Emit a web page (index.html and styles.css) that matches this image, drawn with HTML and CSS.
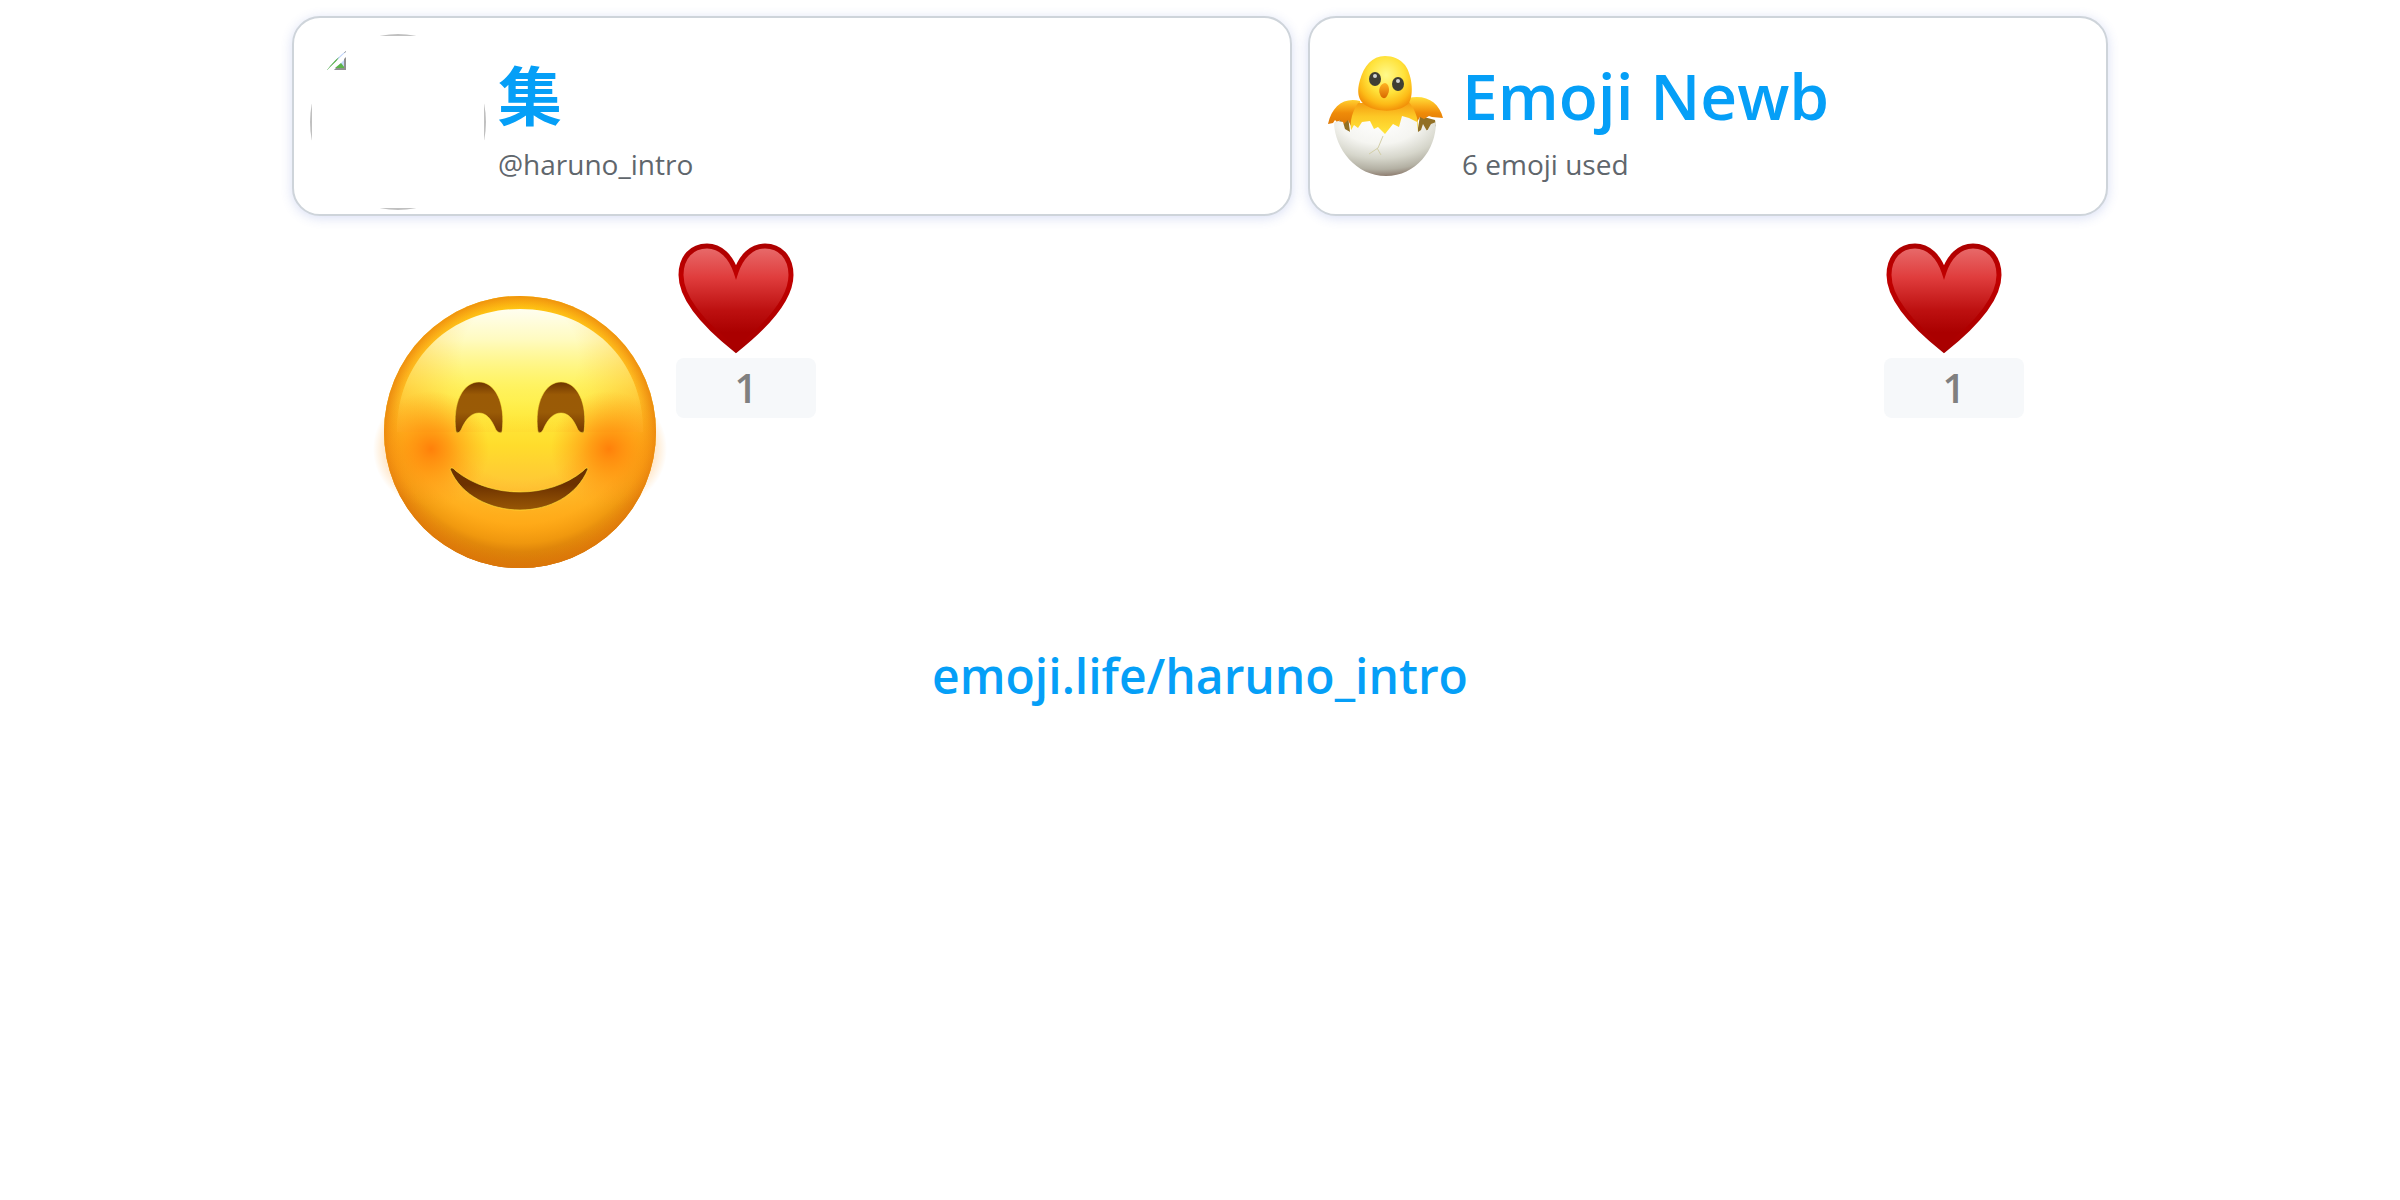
FILE: index.html
```html
<!DOCTYPE html>
<html lang="en">
<head>
<meta charset="utf-8">
<title>emoji.life/haruno_intro</title>
<link rel="stylesheet" href="styles.css">
</head>
<body>
<main class="page">
  <header class="cards">
    <section class="card card-profile">
      <div class="avatar">
        <svg class="avatar-icon" viewBox="0 0 32 32" aria-hidden="true">
          <path fill="#c5d7fa" d="M8 32 32 8V14L14 32Z"/>
          <path fill="#5cb34a" d="M8 32 25 19 22 24 14 32Z"/>
          <path fill="#fff" d="M12 33 33 13V19L20 33Z"/>
          <path fill="#8f8f8f" d="M30 12 32 9V14L30 15Z"/>
          <path fill="#c5d7fa" d="M20 32 32 20V32Z"/>
          <path fill="#5cb34a" d="M21 30 27 25 31 30Z"/>
          <path fill="#8f8f8f" d="M20 32 22 30H30V21L32 19V32Z"/>
        </svg>
      </div>
      <div class="info">
        <h1 class="title" lang="ja">集</h1>
        <p class="sub">@haruno_intro</p>
      </div>
    </section>
    <section class="card card-rank">
      <svg class="chick" viewBox="0 0 120 120" role="img" aria-label="Hatching chick">
        <defs>
          <radialGradient id="chickHead" cx=".52" cy=".35" r=".68">
            <stop offset="0" stop-color="#fffa8c"/><stop offset=".5" stop-color="#ffe23a"/><stop offset=".78" stop-color="#fdbb17"/><stop offset="1" stop-color="#f18a06"/>
          </radialGradient>
          <linearGradient id="chickBody" x1="0" y1="0" x2="0" y2="1">
            <stop offset="0" stop-color="#f49a10"/><stop offset=".45" stop-color="#fdc825"/><stop offset="1" stop-color="#ffe53b"/>
          </linearGradient>
          <linearGradient id="chickWing" x1="0" y1="0" x2="0" y2="1">
            <stop offset="0" stop-color="#ffe03a"/><stop offset=".3" stop-color="#fbb01c"/><stop offset=".55" stop-color="#ef8b09"/><stop offset="1" stop-color="#dd7605"/>
          </linearGradient>
          <radialGradient id="shell" cx=".45" cy=".08" r=".92">
            <stop offset="0" stop-color="#fff"/><stop offset=".42" stop-color="#f5f5f1"/><stop offset=".68" stop-color="#d6d6cb"/><stop offset=".88" stop-color="#b3b0a3"/><stop offset="1" stop-color="#8f7f72"/>
          </radialGradient>
          <linearGradient id="beak" x1="0" y1="0" x2="0" y2="1">
            <stop offset="0" stop-color="#ffb423"/><stop offset="1" stop-color="#d96800"/>
          </linearGradient>
        </defs>
        <path fill="#927025" d="M9 67 22 60 24 76 17 74ZM91 78 94 60 109 64 110 70 102 74Z"/>
        <path fill="url(#chickWing)" d="M34 45C18 41 6 50 2 68L7 67 9 64 12 67 14 64 18 68 22 64 25 70 36 65ZM82 42C100 38 113 46 117 62L106 61 103 60 98 63 94 61 91 66 84 63Z"/>
        <path fill="url(#chickBody)" d="M32 47C25 57 23 70 26 78H91C94 66 90 55 83 46Z"/>
        <path fill="url(#chickHead)" d="M59 0C46 0 38 10 34 24 31 34 31 45 41 50 51 56 72 57 82 48 88 42 87 20 79 9 74 3 67 0 59 0Z"/>
        <ellipse cx="49" cy="23" rx="6" ry="7" fill="#3f3e34"/>
        <ellipse cx="72" cy="28" rx="6" ry="7" fill="#3f3e34"/>
        <circle cx="49" cy="20" r="2" fill="#d2d4d2"/>
        <circle cx="72" cy="25" r="2" fill="#d2d4d2"/>
        <path fill="url(#beak)" d="M59 27C54 28 52 34 54 38 55 43 60 44 62 38 64 34 63 28 59 27Z"/>
        <path fill="url(#shell)" d="M8 67 12 65 17 66 19 73 24 76 28 69 32 72 36 66 44 65 48 73 52 71 59 78 67 68 73 71 76 60 83 62 91 66 92 76 95 74 97 68 101 75 105 68 110 66C110 94 90 120 60 120 30 120 9 93 8 67Z"/>
        <path fill="none" stroke="#d3cfa8" d="M57 80 52 92 43 98M51 92 55 99"/>
      </svg>
      <div class="info">
        <h2 class="title">Emoji Newb</h2>
        <p class="sub">6 emoji used</p>
      </div>
    </section>
  </header>

  <section class="collection">
    <svg class="face" viewBox="0 0 300 300" role="img" aria-label="Smiling face">
      <defs>
        <linearGradient id="faceBase" x1="0" y1="0" x2="0" y2="1">
          <stop offset="0" stop-color="#ffe00c"/><stop offset=".38" stop-color="#fff043"/><stop offset=".55" stop-color="#ffdc2c"/><stop offset=".7" stop-color="#ffc636"/><stop offset=".86" stop-color="#ffad17"/><stop offset="1" stop-color="#e08a0c"/>
        </linearGradient>
        <radialGradient id="faceSide" gradientUnits="userSpaceOnUse" cx="150" cy="125" r="162">
          <stop offset=".45" stop-color="#ffa818" stop-opacity="0"/><stop offset=".72" stop-color="#ffa616" stop-opacity=".6"/><stop offset=".84" stop-color="#ee950d" stop-opacity=".85"/><stop offset="1" stop-color="#ba5c00"/>
        </radialGradient>
        <radialGradient id="faceEdge">
          <stop offset=".88" stop-color="#ff9a12" stop-opacity="0"/><stop offset="1" stop-color="#e87f0c"/>
        </radialGradient>
        <linearGradient id="faceShine" x1="0" y1="0" x2="0" y2="1">
          <stop offset="0" stop-color="#fffef0"/><stop offset=".25" stop-color="#fffbc0"/><stop offset=".6" stop-color="#fff570" stop-opacity=".8"/><stop offset="1" stop-color="#ffe840" stop-opacity="0"/>
        </linearGradient>
        <radialGradient id="shineGlow" gradientUnits="userSpaceOnUse" cx="150" cy="75" r="145">
          <stop offset=".4" stop-color="#ffc12a" stop-opacity="0"/><stop offset="1" stop-color="#ffb52a" stop-opacity=".6"/>
        </radialGradient>
        <radialGradient id="blush">
          <stop offset="0" stop-color="#ff800a"/><stop offset=".35" stop-color="#ff8b0d" stop-opacity=".7"/><stop offset="1" stop-color="#ff9b18" stop-opacity="0"/>
        </radialGradient>
        <linearGradient id="eyeFill" x1="0" y1="0" x2="0" y2="1">
          <stop offset="0" stop-color="#6d3500"/><stop offset=".25" stop-color="#9a5a06"/><stop offset=".6" stop-color="#9a5b06"/><stop offset="1" stop-color="#743700"/>
        </linearGradient>
        <linearGradient id="mouthFill" x1="0" y1="0" x2="0" y2="1">
          <stop offset=".4" stop-color="#6c3100"/><stop offset=".75" stop-color="#874803"/><stop offset="1" stop-color="#975605"/>
        </linearGradient>
      </defs>
      <circle cx="150" cy="150" r="136" fill="url(#faceBase)"/>
      <circle cx="150" cy="150" r="136" fill="url(#faceSide)"/>
      <circle cx="150" cy="150" r="136" fill="url(#faceEdge)" opacity=".7"/>
      <path fill="url(#faceShine)" d="M27 150C27 76 82 27 150 27S273 76 273 150Z"/>
      <path fill="url(#shineGlow)" d="M27 150C27 76 82 27 150 27S273 76 273 150Z"/>
      <circle cx="61" cy="167" r="58" fill="url(#blush)"/>
      <circle cx="239" cy="167" r="58" fill="url(#blush)"/>
      <g id="eye">
        <path fill="url(#eyeFill)" stroke="#ffe83c" stroke-opacity=".5" d="M86 150C82 121 93 100 109 100S136 121 132 150Q129 152 126 148C121 136 116 131 109 131S96 136 91 148Q89 152 86 150Z"/>
      </g>
      <use href="#eye" x="82"/>
      <path fill="url(#mouthFill)" stroke="#ffe83c" stroke-opacity=".6" d="M80 187Q82 184 86 189C121 217 179 217 213 189Q217 184 218 187C207 214 179 228 150 228S91 214 80 187Z"/>
    </svg>

    <div class="item">
      <svg class="heart" viewBox="0 0 120 118" role="img" aria-label="Heart">
        <defs>
          <linearGradient id="heartFill" x1="0" y1="0" x2="0" y2="1">
            <stop offset="0" stop-color="#e86d6d"/><stop offset=".3" stop-color="#e03d3d"/><stop offset=".62" stop-color="#bd1010"/><stop offset=".83" stop-color="#aa0000"/><stop offset="1" stop-color="#aa0000"/>
          </linearGradient>
          <linearGradient id="heartEdge" x1="0" y1="0" x2="0" y2="1">
            <stop offset="0" stop-color="#ad0000"/><stop offset=".3" stop-color="#c10000"/><stop offset="1" stop-color="#a80000"/>
          </linearGradient>
        </defs>
        <path fill="url(#heartFill)" stroke="url(#heartEdge)" stroke-width="5" d="M60 110C36 91 5 62 5 35 5 17 16 6 31 6 45 6 55 17 60 32 65 17 75 6 89 6 104 6 115 17 115 35 115 62 84 91 60 110Z"/>
      </svg>
      <div class="count">1</div>
    </div>

    <div class="item item-last">
      <svg class="heart" viewBox="0 0 120 118" role="img" aria-label="Heart">
        <path fill="url(#heartFill)" stroke="url(#heartEdge)" stroke-width="5" d="M60 110C36 91 5 62 5 35 5 17 16 6 31 6 45 6 55 17 60 32 65 17 75 6 89 6 104 6 115 17 115 35 115 62 84 91 60 110Z"/>
      </svg>
      <div class="count">1</div>
    </div>
  </section>

  <footer class="footer"><a class="link" href="https://emoji.life/haruno_intro">emoji.life/haruno_intro</a></footer>
</main>
</body>
</html>
```

FILE: styles.css
```css
* { box-sizing: border-box; }

body {
  margin: 0;
  background: #fff;
  color: #60666c;
  font-family: "Open Sans", "Noto Sans CJK JP", sans-serif;
}

.page {
  max-width: 1816px;
  margin: 0 auto;
  padding-top: 16px;
}

.cards {
  display: grid;
  grid-template-columns: 5fr 4fr;
  gap: 16px;
}

.card {
  display: flex;
  align-items: center;
  padding: 4px 16px;
  border: 2px solid #ced4da;
  border-radius: 28px;
  background: #fff;
  box-shadow: 0 2px 12px rgba(60, 90, 200, 0.2);
}

.card-profile { gap: 12px; }
.card-rank { gap: 16px; }

.avatar {
  display: flex;
  flex: none;
  width: 176px;
  height: 176px;
  margin-top: 12px;
  padding: 2px;
  border: 2px solid #c0c0c0;
  clip-path: circle(50%);
}

.avatar-icon { width: 32px; height: 32px; }
.chick { flex: none; width: 120px; height: 120px; }

.title {
  margin: 0;
  color: #059ff7;
  font-size: 64px;
  font-weight: 600;
  line-height: 96px;
}

.sub { margin: 0; font-size: 28px; line-height: 40px; }

.collection {
  display: flex;
  align-items: flex-start;
  gap: 6px;
  padding: 24px 84px 0 78px;
}

.face { width: 300px; height: 300px; margin-top: 42px; }
.item { width: 140px; }
.item-last { margin-left: auto; }
.heart { display: block; width: 120px; height: 118px; }

.count {
  border-radius: 8px;
  background: #f6f8fa;
  color: #808080;
  font-size: 40px;
  font-weight: 600;
  line-height: 60px;
  text-align: center;
}

.footer {
  margin-top: 62px;
  font-size: 48px;
  font-weight: 600;
  line-height: 64px;
  text-align: center;
}

.link { color: #059ff7; text-decoration: none; }
```
